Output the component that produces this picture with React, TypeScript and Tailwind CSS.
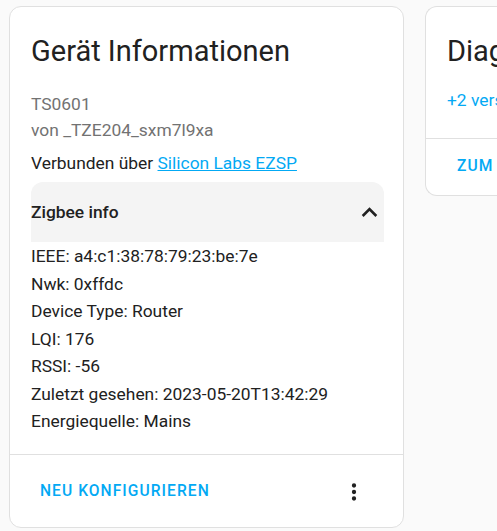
const zigbee = [
  "IEEE: a4:c1:38:78:79:23:be:7e",
  "Nwk: 0xffdc",
  "Device Type: Router",
  "LQI: 176",
  "RSSI: -56",
  "Zuletzt gesehen: 2023-05-20T13:42:29",
  "Energiequelle: Mains",
];

function ChevronUp() {
  return (
    <svg viewBox="0 0 24 24" className="w-[31px] h-[31px] -mr-[1px]" fill="#212121">
      <path d="M7.41,15.41L12,10.83L16.59,15.41L18,14L12,8L6,14L7.41,15.41Z" />
    </svg>
  );
}

function DotsVertical() {
  return (
    <svg viewBox="0 0 24 24" className="w-[26px] h-[26px]" fill="#212121">
      <path d="M12,16A2,2 0 0,1 14,18A2,2 0 0,1 12,20A2,2 0 0,1 10,18A2,2 0 0,1 12,16M12,10A2,2 0 0,1 14,12A2,2 0 0,1 12,14A2,2 0 0,1 10,12A2,2 0 0,1 12,10M12,4A2,2 0 0,1 14,6A2,2 0 0,1 12,8A2,2 0 0,1 10,6A2,2 0 0,1 12,4Z" />
    </svg>
  );
}

export default function App() {
  return (
    <div
      className="w-[497px] h-[531px] overflow-hidden bg-[#fafafa] text-[#212121]"
      style={{ fontFamily: "Roboto, 'Noto Sans', sans-serif" }}
    >
      <div className="flex gap-[21px] pl-[9px] pt-[6px] items-start">
        {/* --- Device info card --- */}
        <div className="w-[395px] h-[522px] shrink-0 flex flex-col bg-white border border-[#e0e0e0] rounded-[12px]">
          <div className="px-[21px] pt-[28px] text-[29px] leading-[32px]">
            Gerät Informationen
          </div>

          <div className="pl-[21px] pr-[19px] flex-1">
            <div className="mt-[24px] text-[17.4px] leading-[26px] text-[#727272]">
              <div>TS0601</div>
              <div>von _TZE204_sxm7l9xa</div>
            </div>
            <div className="mt-[7px] text-[17.4px] leading-[26px]">
              Verbunden über{" "}
              <span className="text-[#03a9f4] underline">Silicon Labs EZSP</span>
            </div>

            <div className="mt-[6px] h-[60px] bg-[#f4f4f4] rounded-t-[12px] flex items-center justify-between">
              <span className="text-[17.4px] font-medium">Zigbee info</span>
              <ChevronUp />
            </div>
            <div className="pt-[1px] text-[17.4px] leading-[27.5px]">
              {zigbee.map((line) => (
                <div key={line}>{line}</div>
              ))}
            </div>
          </div>

          <div className="h-[73px] pt-[2px] border-t border-[#e0e0e0] flex items-center justify-between pl-[30px] pr-[36px]">
            <span className="text-[15.6px] font-medium tracking-[1.05px] text-[#03a9f4]">
              NEU KONFIGURIEREN
            </span>
            <DotsVertical />
          </div>
        </div>

        {/* --- Diagnostic card (cut off at the window edge) --- */}
        <div className="w-[72px] h-[190px] shrink-0 overflow-hidden flex flex-col bg-white border-y border-l border-[#e0e0e0] rounded-l-[12px]">
          <div className="px-[21px] pt-[28px] text-[29px] leading-[32px] whitespace-nowrap">
            Diag
          </div>
          <div className="px-[21px] mt-[20px] text-[17.4px] leading-[26px] text-[#03a9f4] flex-1 whitespace-nowrap">
            +2 vers
          </div>
          <div className="h-[57px] border-t border-[#e0e0e0] flex items-center pl-[31px] whitespace-nowrap">
            <span className="text-[15.6px] font-medium tracking-[1.05px] text-[#03a9f4]">
              ZUM
            </span>
          </div>
        </div>
      </div>
    </div>
  );
}
